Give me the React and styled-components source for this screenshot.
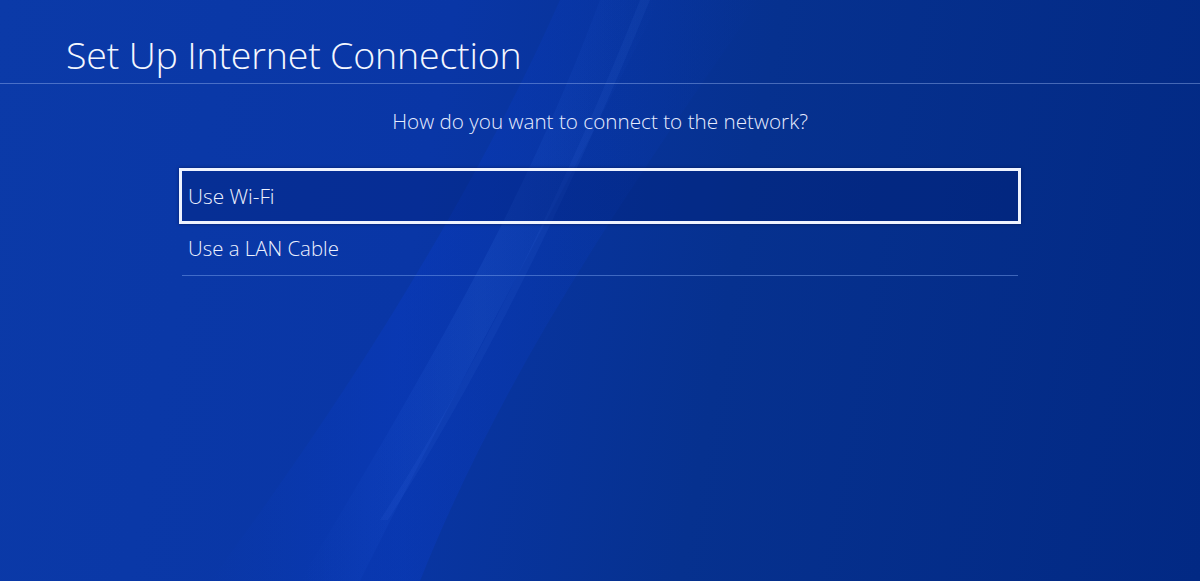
import React from "react";
import styled, { createGlobalStyle } from "styled-components";

const Global = createGlobalStyle`
  html, body { margin: 0; padding: 0; }
  body { font-family: "Open Sans", "Noto Sans", sans-serif; }
`;

const Screen = styled.div`
  position: relative;
  width: 1200px;
  height: 581px;
  overflow: hidden;
  background: linear-gradient(100deg, #0b3aa8 0%, #0936a6 35%, #06318f 60%, #022984 100%);
  color: #fff;
`;

const Waves = styled.svg`
  position: absolute;
  inset: 0;
  width: 100%;
  height: 100%;
  pointer-events: none;
`;

const Content = styled.div`
  position: relative;
  display: flex;
  flex-direction: column;
`;

const Header = styled.header`
  height: 84px;
  display: flex;
  align-items: flex-end;
  padding-left: 66px;
  border-bottom: 1px solid rgba(150, 180, 240, 0.45);
  box-sizing: border-box;
`;

const Title = styled.h1`
  margin: 0 0 6px;
  font-weight: 300;
  font-size: 37.6px;
  letter-spacing: -0.2px;
  line-height: 1.2;
  color: #f4f7ff;
`;

const Prompt = styled.p`
  margin: 20px 0 0;
  text-align: center;
  font-weight: 300;
  font-size: 20.7px;
  line-height: 34px;
  color: #e6ecff;
`;

const Options = styled.ul`
  list-style: none;
  margin: 30px 0 0 179px;
  padding: 0;
  width: 842px;
`;

const Option = styled.li`
  box-sizing: border-box;
  height: ${(p) => (p.$selected ? "56px" : "52px")};
  display: flex;
  align-items: center;
  padding: 0 0 ${(p) => (p.$selected ? "0" : "4px")} 6px;
  margin: 0 ${(p) => (p.$selected ? "0" : "3px")};
  font-weight: 300;
  font-size: ${(p) => (p.$selected ? "20.8px" : "20.4px")};
  color: #eef2ff;
  border: ${(p) => (p.$selected ? "3px solid #eef3ff" : "none")};
  border-bottom: ${(p) => (p.$selected ? "3px solid #eef3ff" : "1px solid rgba(120, 160, 235, 0.5)")};
  background: ${(p) => (p.$selected ? "rgba(0, 25, 110, 0.3)" : "transparent")};
  box-shadow: ${(p) => (p.$selected ? "0 0 3px rgba(0,10,60,0.6)" : "none")};
`;

export default function App() {
  return (
    <>
      <Global />
      <Screen>
        <Waves viewBox="0 0 1200 581" preserveAspectRatio="none">
          <defs>
            <linearGradient id="band" x1="0" y1="0" x2="1" y2="0">
              <stop offset="0" stopColor="#2a6bff" stopOpacity="0" />
              <stop offset="0.5" stopColor="#3a78e8" stopOpacity="0.14" />
              <stop offset="1" stopColor="#2a6bff" stopOpacity="0" />
            </linearGradient>
            <linearGradient id="glow" x1="0" y1="0" x2="1" y2="0">
              <stop offset="0" stopColor="#0a3ed0" stopOpacity="0" />
              <stop offset="0.35" stopColor="#0a3ed0" stopOpacity="0.3" />
              <stop offset="1" stopColor="#0a3ed0" stopOpacity="0" />
            </linearGradient>
          </defs>
          <path d="M560 0 C 480 180, 360 380, 210 581 L 420 581 C 500 380, 620 200, 760 0 Z" fill="url(#glow)" />
          <path d="M600 0 C 540 160, 470 300, 300 581 L 360 581 C 470 360, 560 200, 660 0 Z" fill="url(#band)" />
          <path d="M640 0 C 560 200, 470 380, 380 520 L 388 520 C 478 380, 568 200, 650 0 Z" fill="#5c8cff" opacity="0.07" />
        </Waves>
        <Content>
          <Header>
            <Title>Set Up Internet Connection</Title>
          </Header>
          <Prompt>How do you want to connect to the network?</Prompt>
          <Options>
            <Option $selected>Use Wi-Fi</Option>
            <Option>Use a LAN Cable</Option>
          </Options>
        </Content>
      </Screen>
    </>
  );
}
